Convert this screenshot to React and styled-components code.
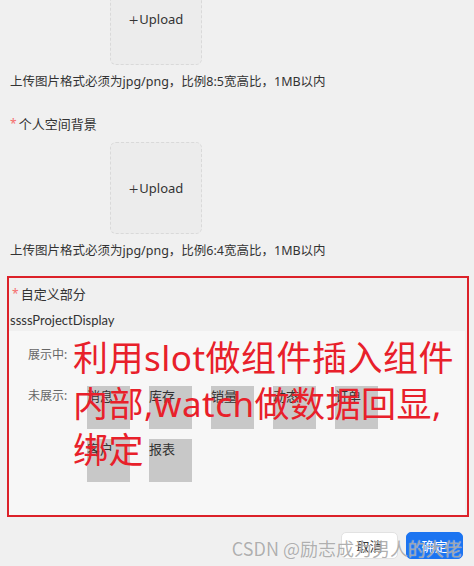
import styled, { createGlobalStyle } from 'styled-components';

const GlobalStyle = createGlobalStyle`
  html, body {
    margin: 0;
    padding: 0;
    background: #f0f0f0;
  }
  body {
    font-family: "Noto Sans", "Noto Sans CJK SC", sans-serif;
    color: #333;
    overflow: hidden;
  }
`;

const Page = styled.div`
  position: relative;
  width: 474px;
  height: 566px;
  overflow: hidden;
  box-sizing: border-box;
  padding: 0 5px 0 7px;
`;

const Section = styled.div`
  padding-left: 3px;
`;

const UploadBox = styled.div`
  width: 90px;
  height: 90px;
  margin: ${(p) => (p.$first ? '-27px' : '8px')} 0 0 100px;
  border: 1px dashed #d9d9d9;
  border-radius: 6px;
  background: #ececec;
  display: flex;
  align-items: center;
  justify-content: center;
  font-size: 13px;
  color: #333;
`;

const Plus = styled.span`
  font-size: 17px;
  font-weight: 300;
  line-height: 1;
  margin-right: 1px;
`;

const Hint = styled.div`
  margin-top: 7px;
  font-size: 12.5px;
  line-height: 20px;
  color: #333;
  white-space: nowrap;
`;

const Label = styled.div`
  margin-top: ${(p) => p.$top || 0}px;
  padding-left: 3px;
  font-size: 13px;
  line-height: 20px;
  color: #333;
  display: flex;
  align-items: center;
  gap: 2px;

  &::before {
    content: '*';
    color: #f56c6c;
    font-size: 12px;
  }
`;

const CustomBox = styled.div`
  margin-top: 15px;
  height: 241px;
  box-sizing: border-box;
  border: 2px solid #dc2129;
  padding-top: 6px;
  display: flex;
  flex-direction: column;
`;

const CompName = styled.div`
  margin-top: 6px;
  padding-left: 1px;
  font-family: Lato, "Noto Sans", sans-serif;
  font-size: 13px;
  line-height: 20px;
  color: #333;
`;

const Display = styled.div`
  position: relative;
  flex: 1;
  margin: 1px 2px 0 0;
  background: #f7f7f7;
  padding: 14px 0 0 19px;
  display: flex;
  flex-direction: column;
  gap: 21px;
`;

const Row = styled.div`
  display: flex;
  align-items: flex-start;
`;

const RowLabel = styled.div`
  width: 59px;
  flex-shrink: 0;
  font-size: 12px;
  line-height: 20px;
  color: #666;
`;

const Tiles = styled.div`
  display: grid;
  grid-template-columns: repeat(5, 43px);
  column-gap: 19px;
  row-gap: 10px;
`;

const Tile = styled.div`
  width: 43px;
  height: 43px;
  background: #c8c8c8;
  font-size: 13px;
  line-height: 20px;
  color: #333;
`;

const Annotation = styled.div`
  position: absolute;
  left: 64px;
  top: 4px;
  font-family: "Noto Sans", "Noto Sans CJK SC", sans-serif;
  font-size: 35px;
  letter-spacing: 0.5px;
  line-height: 46px;
  color: #e8202a;
  white-space: nowrap;
  pointer-events: none;
`;

const Footer = styled.div`
  display: flex;
  justify-content: flex-end;
  gap: 8px;
  padding: 15px 6px 0 0;
`;

const Button = styled.button`
  width: 57px;
  height: 27px;
  border-radius: 5px;
  font-family: "Noto Sans CJK SC", sans-serif;
  font-size: 13px;
  border: 1px solid ${(p) => (p.$primary ? '#1b74f1' : '#e2e2e2')};
  background: ${(p) => (p.$primary ? '#1b74f1' : '#fff')};
  color: ${(p) => (p.$primary ? '#fff' : '#333')};
  padding: 0;
`;

const Watermark = styled.div`
  position: absolute;
  right: 12px;
  bottom: 6px;
  font-family: "Noto Sans CJK SC", sans-serif;
  font-size: 18px;
  line-height: 24px;
  color: rgba(150, 150, 150, 0.75);
  text-shadow: 0 0 1px rgba(255, 255, 255, 0.8);
  white-space: nowrap;
  pointer-events: none;
`;

const shown = [];
const hidden = ['消息', '库存', '销量', '动态', '订单', '客户', '报表'];

export default function App() {
  return (
    <>
      <GlobalStyle />
      <Page>
        <Section>
          <UploadBox $first>
            <Plus>+</Plus>Upload
          </UploadBox>
          <Hint>上传图片格式必须为jpg/png，比例8:5宽高比，1MB以内</Hint>
        </Section>
        <Label $top={22}>个人空间背景</Label>
        <Section>
          <UploadBox>
            <Plus>+</Plus>Upload
          </UploadBox>
          <Hint>上传图片格式必须为jpg/png，比例6:4宽高比，1MB以内</Hint>
        </Section>
        <CustomBox>
          <Label>自定义部分</Label>
          <CompName>ssssProjectDisplay</CompName>
          <Display>
            <Row>
              <RowLabel>展示中:</RowLabel>
              <Tiles>
                {shown.map((name) => (
                  <Tile key={name}>{name}</Tile>
                ))}
              </Tiles>
            </Row>
            <Row>
              <RowLabel>未展示:</RowLabel>
              <Tiles>
                {hidden.map((name) => (
                  <Tile key={name}>{name}</Tile>
                ))}
              </Tiles>
            </Row>
            <Annotation>
              利用slot做组件插入组件
              <br />
              内部,watch做数据回显,
              <br />
              绑定
            </Annotation>
          </Display>
        </CustomBox>
        <Footer>
          <Button>取消</Button>
          <Button $primary>确定</Button>
        </Footer>
        <Watermark>CSDN @励志成为男人的大佬</Watermark>
      </Page>
    </>
  );
}
